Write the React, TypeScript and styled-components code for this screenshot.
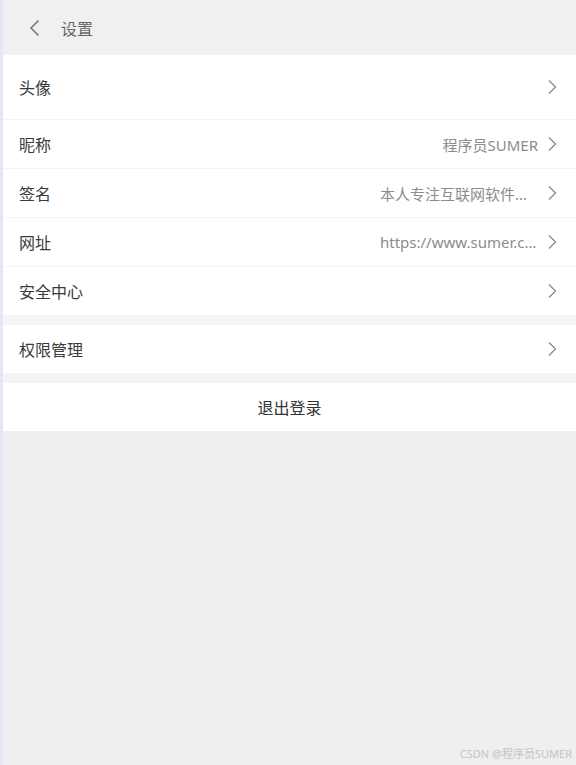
import React from 'react'
import styled, { createGlobalStyle } from 'styled-components'

const GlobalStyle = createGlobalStyle`
    html, body {
        margin: 0;
        padding: 0;
        background: #efefef;
    }
    body {
        font-family: "Noto Sans", "Noto Sans CJK SC", sans-serif;
    }
`

const Page = styled.div`
    position: relative;
    min-height: 100vh;
    border-left: 3px solid #e3e6f3;
    background: #efefef;
    box-sizing: border-box;
`

const Header = styled.div`
    height: 55px;
    display: flex;
    align-items: center;
    background: #f0f0f0;
    padding-left: 25px;
`

const BackIcon = styled.svg`
    width: 16px;
    height: 18px;
    margin-right: 17px;
`

const Title = styled.span`
    font-size: 16px;
    color: #666;
`

const Group = styled.div`
    background: #fff;
`

const Row = styled.div<{ tall?: boolean; last?: boolean }>`
    height: ${(p) => (p.tall ? 64 : 48)}px;
    display: flex;
    align-items: center;
    padding: 0 19px 0 16px;
    border-bottom: ${(p) => (p.last ? 'none' : '1px solid #f3f3f3')};
`

const Label = styled.span`
    flex: 1;
    font-size: 16px;
    color: #3a3a3a;
`

const Value = styled.span`
    max-width: 158px;
    overflow: hidden;
    white-space: nowrap;
    text-overflow: ellipsis;
    font-size: 15px;
    color: #8c8c8c;
    margin-right: 9px;
`

const Chevron = styled.svg`
    width: 10px;
    height: 16px;
    flex-shrink: 0;
`

const Logout = styled.div`
    height: 48px;
    background: #fff;
    display: flex;
    align-items: center;
    justify-content: center;
    font-size: 16px;
    color: #333;
`

const Spacer = styled.div`
    height: 10px;
    background: #f4f4f4;
`

const Watermark = styled.div`
    position: absolute;
    right: 4px;
    bottom: 4px;
    font-size: 11px;
    color: #c4c4c4;
`

const Arrow = () => (
    <Chevron viewBox="0 0 10 16">
        <path d="M2 1.5 L8.5 8 L2 14.5" fill="none" stroke="#8a8a8a" strokeWidth="1.3" />
    </Chevron>
)

type Item = { label: string; value?: string; tall?: boolean }

const items: Item[] = [
    { label: '头像', tall: true },
    { label: '昵称', value: '程序员SUMER' },
    { label: '签名', value: '本人专注互联网软件开发与分享' },
    { label: '网址', value: 'https://www.sumer.com' },
    { label: '安全中心' },
]

const App: React.FC = (): JSX.Element => {
    return (
        <>
            <GlobalStyle />
            <Page>
                <Header>
                    <BackIcon viewBox="0 0 16 18">
                        <path d="M10.5 1.5 L3 9 L10.5 16.5" fill="none" stroke="#777" strokeWidth="1.6" />
                    </BackIcon>
                    <Title>设置</Title>
                </Header>
                <Group>
                    {items.map((item, i) => (
                        <Row key={item.label} tall={item.tall} last={i === items.length - 1}>
                            <Label>{item.label}</Label>
                            {item.value && <Value>{item.value}</Value>}
                            <Arrow />
                        </Row>
                    ))}
                </Group>
                <Spacer />
                <Group>
                    <Row last>
                        <Label>权限管理</Label>
                        <Arrow />
                    </Row>
                </Group>
                <Spacer />
                <Logout>退出登录</Logout>
                <Watermark>CSDN @程序员SUMER</Watermark>
            </Page>
        </>
    )
}

export default App
